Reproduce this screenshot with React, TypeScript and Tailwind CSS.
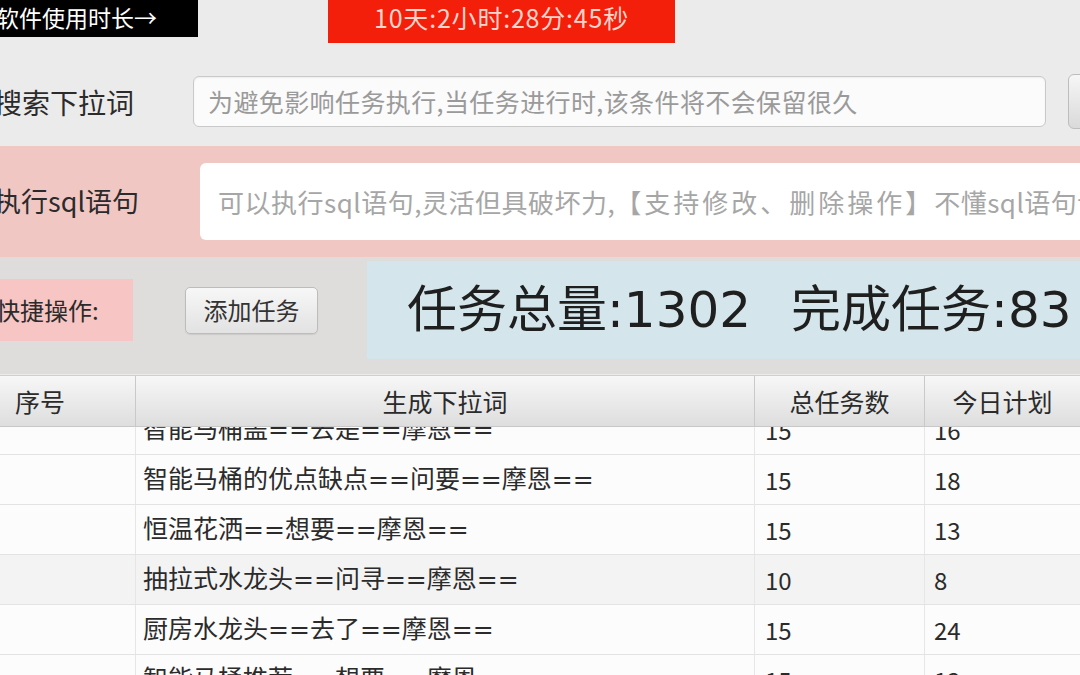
const FONT = "font-['Noto_Sans_CJK_SC','Noto_Sans',sans-serif]";
// DejaVu first: its wide '=' and digits match the capture, CJK falls through to Noto
const WIDE = "font-['DejaVu_Sans','Noto_Sans_CJK_SC',sans-serif]";

type Row = { word: string; total: string; today: string; shade?: boolean };

const rows: Row[] = [
  { word: '智能马桶盖==去是==摩恩==', total: '15', today: '16' },
  { word: '智能马桶的优点缺点==问要==摩恩==', total: '15', today: '18' },
  { word: '恒温花洒==想要==摩恩==', total: '15', today: '13' },
  { word: '抽拉式水龙头==问寻==摩恩==', total: '10', today: '8', shade: true },
  { word: '厨房水龙头==去了==摩恩==', total: '15', today: '24' },
  { word: '智能马桶推荐==想要==摩恩==', total: '15', today: '12' },
];

export default function App() {
  return (
    <div className={`w-[1080px] h-[675px] overflow-hidden bg-[#ebebeb] text-[#2b2b2b] ${FONT}`}>
      {/* usage timer */}
      <div className="flex h-[60px] items-start">
        <div className="w-[198px] h-[37px] bg-black text-white text-[23px] leading-[35px] -indent-[4px] whitespace-nowrap overflow-hidden">
          软件使用时长→
        </div>
        <div className="ml-[130px] w-[347px] h-[43px] bg-[#f41f0b] text-[#ffd6cc] text-[25px] leading-[34px] text-center tracking-[0.8px]">
          10天:2小时:28分:45秒
        </div>
      </div>

      {/* search dropdown words */}
      <div className="flex items-center h-[86px] pb-[3px]">
        <div className="w-[193px] -ml-[6px] text-[28px] whitespace-nowrap shrink-0">搜索下拉词</div>
        <div className="ml-[6px] w-[853px] h-[51px] shrink-0 rounded-md border border-[#c9c9c9] bg-[#fbfbfb] px-[14px] text-[25px] tracking-[0.4px] leading-[49px] text-[#9a9a9a] whitespace-nowrap overflow-hidden shadow-[inset_0_1px_2px_rgba(0,0,0,0.06)]">
          为避免影响任务执行,当任务进行时,该条件将不会保留很久
        </div>
        <div className="ml-[22px] w-[40px] h-[55px] shrink-0 rounded-l-md border border-[#bdbdbd] bg-gradient-to-b from-[#f6f6f6] to-[#dadada]" />
      </div>

      {/* sql */}
      <div className="flex items-center h-[111px] bg-[#f1c7c3]">
        <div className="w-[200px] -ml-[6px] text-[27px] whitespace-nowrap shrink-0">执行sql语句</div>
        <div className="ml-[6px] flex-1 h-[77px] rounded-l-md bg-white px-[18px] text-[26px] tracking-[0.5px] leading-[77px] text-[#a6a6a6] whitespace-nowrap overflow-hidden">
          可以执行sql语句,灵活但具破坏力,<span className="tracking-[3px]">【支持修改、删除操作】</span>不懂sql语句请勿使用
        </div>
      </div>

      {/* quick actions */}
      <div className="flex h-[117px] bg-[#dfdddc] pt-[4px]">
        <div className="flex items-center h-[98px]">
          <div className="w-[133px] h-[62px] bg-[#f7c5c3] text-[24px] leading-[62px] -indent-[4px] whitespace-nowrap overflow-hidden">
            快捷操作:
          </div>
          <button className="ml-[52px] w-[133px] h-[47px] rounded-[5px] border border-[#bcbcbc] bg-gradient-to-b from-[#f7f7f7] to-[#e2e2e2] text-[24px] text-[#333] shadow-[0_1px_1px_rgba(0,0,0,0.08)]">
            添加任务
          </button>
        </div>
        <div className={`ml-[49px] flex-1 h-[98px] bg-[#d4e6eb] pl-[40px] text-[50px] leading-[98px] text-[#1f1f1f] whitespace-nowrap overflow-hidden ${WIDE}`}>
          任务总量:1302<span className="ml-[40px]">完成任务:83</span>
        </div>
      </div>

      {/* table */}
      <div className="mt-[1px] border-t border-[#cfcfcf] bg-[#fcfcfc]">
        <div className="grid grid-cols-[136px_619px_170px_155px] h-[51px] bg-gradient-to-b from-[#f7f7f7] to-[#dedede] border-b border-[#c8c8c8] text-[25px] leading-[50px]">
          <div className="pl-[15px] border-r border-[#c9c9c9]">序号</div>
          <div className="text-center border-r border-[#c9c9c9]">生成下拉词</div>
          <div className="text-center border-r border-[#c9c9c9]">总任务数</div>
          <div className="text-center">今日计划</div>
        </div>
        <div className="h-[260px] overflow-hidden">
          <div className="-mt-[22px]">
            {rows.map((r, i) => (
              <div
                key={i}
                className={`grid grid-cols-[136px_619px_170px_155px] h-[50px] border-b border-[#e3e3e3] text-[24px] leading-[49px] ${r.shade ? 'bg-[#f3f3f3]' : 'bg-[#fcfcfc]'}`}
              >
                <div className="border-r border-[#e6e6e6]" />
                <div className={`pl-[7px] border-r border-[#e6e6e6] whitespace-nowrap text-[25px] ${WIDE}`}>{r.word}</div>
                <div className="pl-[10px] border-r border-[#e6e6e6]">{r.total}</div>
                <div className="pl-[9px]">{r.today}</div>
              </div>
            ))}
          </div>
        </div>
      </div>
    </div>
  );
}
